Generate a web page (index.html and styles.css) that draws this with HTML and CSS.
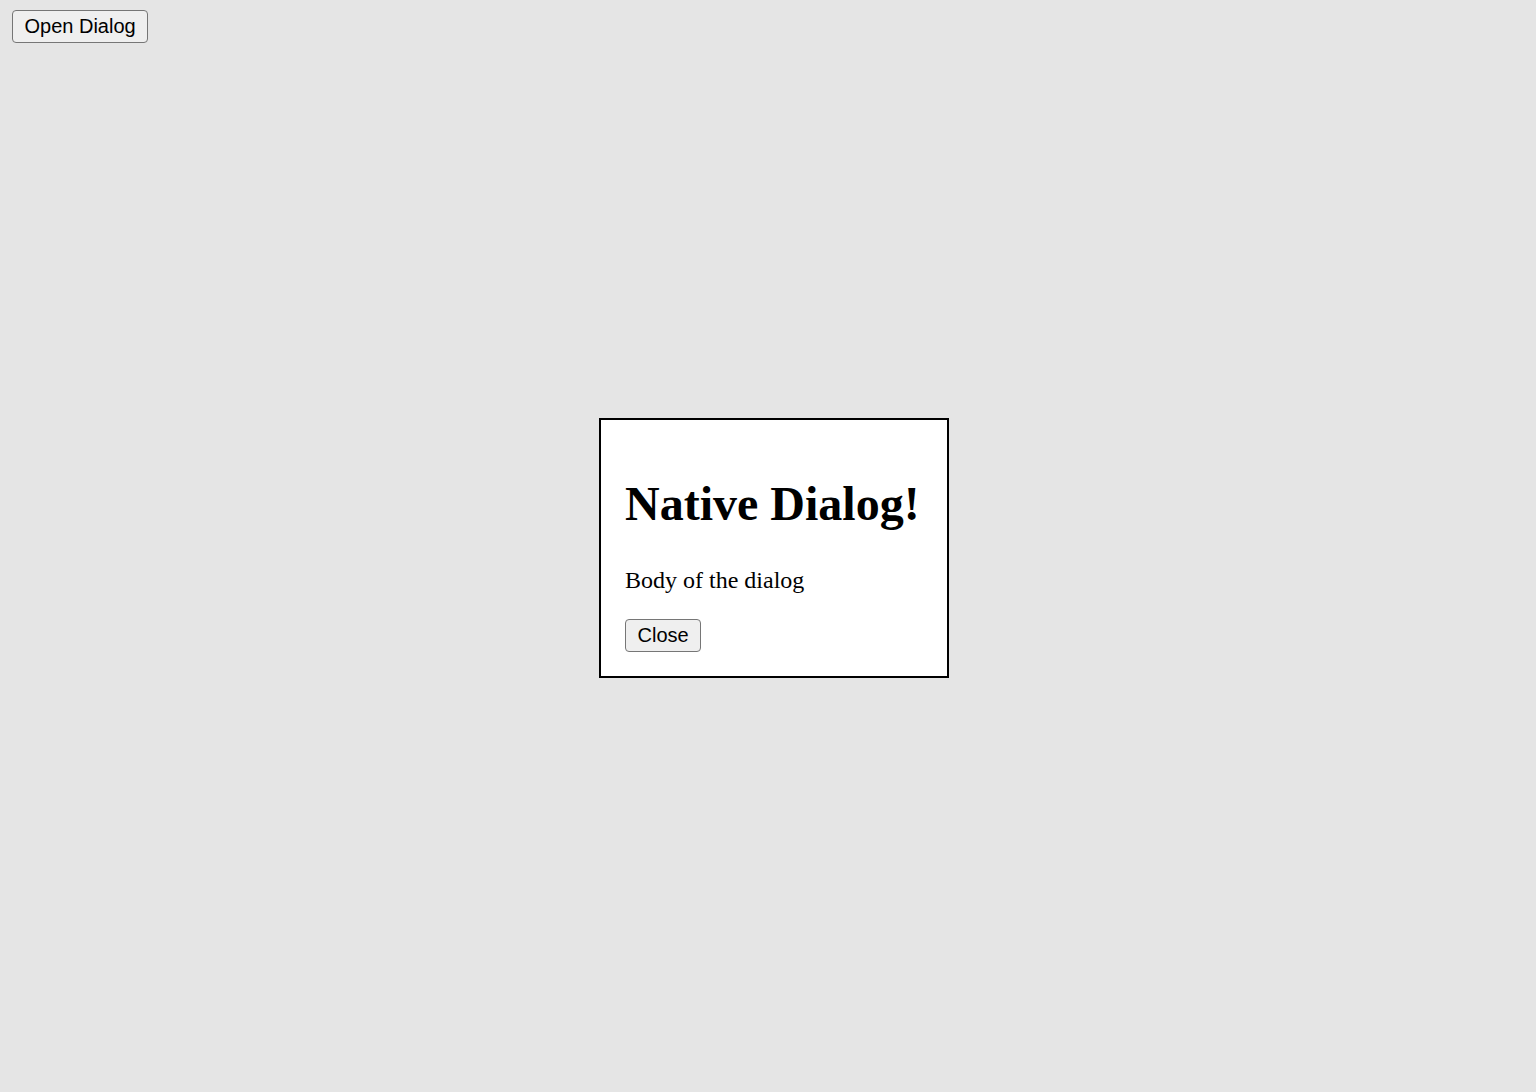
FILE: index.html
```html
<!DOCTYPE html>
<html lang="en">
<head>
    <meta charset="UTF-8">
    <meta name="viewport" content="width=device-width, initial-scale=1.0">
    <title>Native Dialog</title>
    <link rel="stylesheet" href="styles.css">
</head>
<body>
    <button class="btn">Open Dialog</button>

    <div class="backdrop">
        <div class="dialog">
            <h1>Native Dialog!</h1>
            <p>Body of the dialog</p>
            <button class="btn">Close</button>
        </div>
    </div>
</body>
</html>
```

FILE: styles.css
```css
body {
    margin: 0;
    padding: 10px 12px;
    background-color: #e5e5e5;
    font-family: "Liberation Serif", "Times New Roman", serif;
    color: #000;
}
.btn {
    font-family: "Liberation Sans", Arial, sans-serif;
    font-size: 20px;
    line-height: 23px;
    padding: 4px 11.5px;
    background-color: #efefef;
    border: 1px solid #767676;
    border-radius: 4px;
    color: #000;
    cursor: pointer;
}
.backdrop {
    position: fixed;
    inset: 0;
    display: flex;
    align-items: center;
    justify-content: center;
    padding: 3px 0 0 12px;
}
.dialog {
    width: 298px;
    background-color: #fff;
    border: 2px solid #000;
    padding: 24px;
}
.dialog h1 {
    font-size: 48px;
    font-weight: bold;
    line-height: 55px;
    margin: 32px 0 36px;
    white-space: nowrap;
}
.dialog p {
    font-size: 24px;
    line-height: 27px;
    margin: 0 0 25px;
}
.dialog .btn {
    display: block;
}
```
